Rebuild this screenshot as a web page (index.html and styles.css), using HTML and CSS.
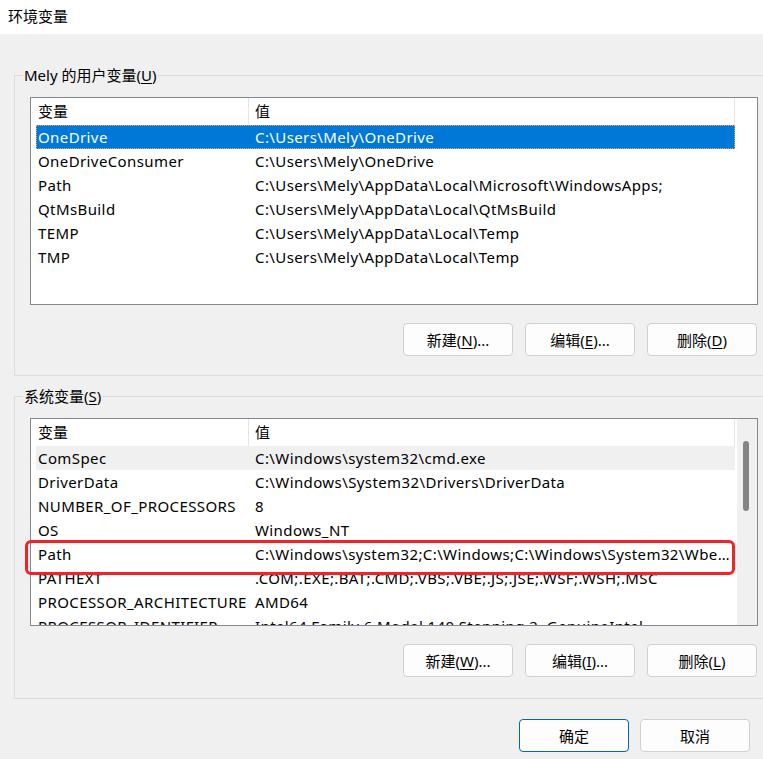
FILE: index.html
```html
<!DOCTYPE html>
<html lang="zh-CN">
<head>
    <meta charset="UTF-8">
    <meta name="viewport" content="width=device-width, initial-scale=1.0">
    <title>环境变量</title>
    <link rel="stylesheet" href="styles.css">
</head>
<body>
    <div class="titlebar">环境变量</div>

    <div class="dialog">
        <fieldset class="group">
            <legend>Mely 的用户变量(<u>U</u>)</legend>
            <div class="list">
                <div class="list-body">
                    <div class="list-header">
                        <div class="head-cell head-name">变量</div>
                        <div class="head-cell head-value">值</div>
                    </div>
                    <div class="row selected"><span>OneDrive</span><span>C:\Users\Mely\OneDrive</span></div>
                    <div class="row"><span>OneDriveConsumer</span><span>C:\Users\Mely\OneDrive</span></div>
                    <div class="row"><span>Path</span><span>C:\Users\Mely\AppData\Local\Microsoft\WindowsApps;</span></div>
                    <div class="row"><span>QtMsBuild</span><span>C:\Users\Mely\AppData\Local\QtMsBuild</span></div>
                    <div class="row"><span>TEMP</span><span>C:\Users\Mely\AppData\Local\Temp</span></div>
                    <div class="row"><span>TMP</span><span>C:\Users\Mely\AppData\Local\Temp</span></div>
                </div>
                <div class="list-side"></div>
            </div>
            <div class="buttons">
                <button class="button">新建(<u>N</u>)...</button>
                <button class="button">编辑(<u>E</u>)...</button>
                <button class="button">删除(<u>D</u>)</button>
            </div>
        </fieldset>

        <fieldset class="group system">
            <legend>系统变量(<u>S</u>)</legend>
            <div class="list">
                <div class="list-body">
                    <div class="list-header">
                        <div class="head-cell head-name">变量</div>
                        <div class="head-cell head-value">值</div>
                    </div>
                    <div class="row hover"><span>ComSpec</span><span>C:\Windows\system32\cmd.exe</span></div>
                    <div class="row"><span>DriverData</span><span>C:\Windows\System32\Drivers\DriverData</span></div>
                    <div class="row"><span>NUMBER_OF_PROCESSORS</span><span>8</span></div>
                    <div class="row"><span>OS</span><span>Windows_NT</span></div>
                    <div class="row"><span>Path</span><span>C:\Windows\system32;C:\Windows;C:\Windows\System32\Wbem;C:\Windows\System32\WindowsPowerShell\v1.0\</span></div>
                    <div class="row"><span>PATHEXT</span><span>.COM;.EXE;.BAT;.CMD;.VBS;.VBE;.JS;.JSE;.WSF;.WSH;.MSC</span></div>
                    <div class="row"><span>PROCESSOR_ARCHITECTURE</span><span>AMD64</span></div>
                    <div class="row"><span>PROCESSOR_IDENTIFIER</span><span>Intel64 Family 6 Model 140 Stepping 2, GenuineIntel</span></div>
                </div>
                <div class="list-side scrollbar">
                    <div class="thumb"></div>
                </div>
                <div class="mark"></div>
            </div>
            <div class="buttons">
                <button class="button">新建(<u>W</u>)...</button>
                <button class="button">编辑(<u>I</u>)...</button>
                <button class="button">删除(<u>L</u>)</button>
            </div>
        </fieldset>

        <div class="footer">
            <button class="button default">确定</button>
            <button class="button">取消</button>
        </div>
    </div>
</body>
</html>
```

FILE: styles.css
```css
body {
    font-family: "Noto Sans", "Noto Sans CJK SC", sans-serif;
    font-size: 15px;
    color: #000;
    background-color: #f0f0f0;
    margin: 0;
    padding: 0;
    width: 763px;
    height: 759px;
    overflow: hidden;
}
.titlebar {
    height: 34px;
    line-height: 32px;
    padding-left: 8px;
    background-color: #fff;
    box-sizing: border-box;
}
.dialog {
    padding-top: 31px;
}
.group {
    width: 760px;
    margin: 0 0 10px 14px;
    padding: 12px 15px 19px 15px;
    border: 1px solid #dcdcdc;
    box-sizing: border-box;
}
.group.system {
    padding-bottom: 21px;
}
.group legend {
    padding: 0 1px;
    margin-left: -7px;
    line-height: 20px;
}
.group u {
    text-underline-offset: 2px;
}
.list {
    position: relative;
    display: flex;
    height: 208px;
    border: 1px solid #828790;
    background-color: #fff;
    box-sizing: border-box;
}
.list-body {
    width: 704px;
    overflow: hidden;
}
.list-header {
    display: flex;
    height: 27px;
    line-height: 27px;
    border-right: 1px solid #e5e5e5;
}
.head-cell {
    box-sizing: border-box;
}
.head-name {
    width: 217px;
    padding-left: 7px;
}
.head-value {
    flex: 1;
    padding-left: 6px;
    border-left: 1px solid #e5e5e5;
}
.row {
    display: grid;
    grid-template-columns: 217px 482px;
    height: 24px;
    line-height: 24px;
    margin-left: 5px;
    white-space: nowrap;
    letter-spacing: 0.4px;
}
.row span {
    padding-left: 2px;
    overflow: hidden;
    text-overflow: ellipsis;
}
.row.selected {
    background-color: #0078d7;
    color: #fff;
    outline: 1px dotted #e8a25a;
    outline-offset: -1px;
}
.row.hover {
    background-color: #f0f0f0;
}
.list-side {
    flex: 1;
    margin-left: 2px;
}
.scrollbar {
    background-color: #f0f0f0;
    padding-top: 22px;
}
.thumb {
    width: 6px;
    height: 70px;
    margin-left: 6px;
    border-radius: 3px;
    background-color: #858585;
}
.mark {
    position: absolute;
    left: -6px;
    top: 121px;
    width: 710px;
    height: 35px;
    border: 3px solid #f02424;
    border-radius: 6px;
    box-sizing: border-box;
}
.buttons {
    display: flex;
    justify-content: flex-end;
    gap: 12px;
    margin-top: 18px;
    margin-right: 1px;
}
.button {
    width: 110px;
    height: 33px;
    font-family: inherit;
    font-size: 15px;
    color: #000;
    background-color: #fdfdfd;
    border: 1px solid #d0d0d0;
    border-radius: 4px;
    padding: 0;
}
.button u {
    text-underline-offset: 2px;
}
.button.default {
    border-color: #0067c0;
}
.footer {
    display: flex;
    justify-content: flex-end;
    gap: 11px;
    margin-top: 20px;
    margin-right: 13px;
}
```
